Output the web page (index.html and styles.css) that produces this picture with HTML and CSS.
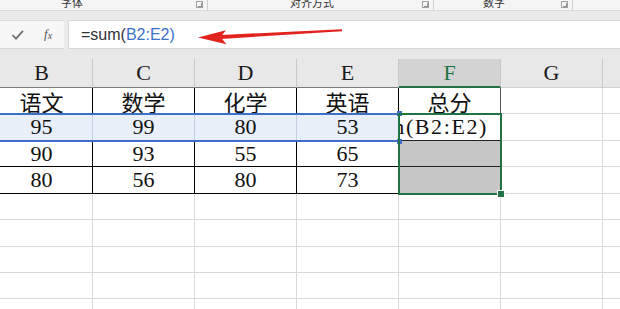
FILE: index.html
```html
<!DOCTYPE html>
<html lang="zh-CN">
<head>
<meta charset="utf-8">
<title>Excel sum</title>
<link rel="stylesheet" href="styles.css">
</head>
<body>
<div class="page">
  <div class="ribbon">
    <span class="rlabel l1">字体</span>
    <span class="launch i1"></span>
    <span class="rsep"></span>
    <span class="rlabel l2">对齐方式</span>
    <span class="launch i2"></span>
    <span class="rsep"></span>
    <span class="rlabel l3">数字</span>
    <span class="launch i3"></span>
    <span class="rsep"></span>
  </div>
  <div class="rline"></div>
  <div class="band"></div>
  <div class="fbar">
    <div class="fbar-left">
      <svg class="check" width="14" height="12" viewBox="0 0 14 12"><path d="M1.5 6.2 L5 9.6 L12 1.8" fill="none" stroke="#707070" stroke-width="1.8"/></svg>
      <span class="fx">f<span class="fxx">x</span></span>
    </div>
    <div class="fbar-input"><span class="fdark">=sum(</span><span class="fblue">B2:E2)</span></div>
  </div>
  <div class="band2"></div>
  <div class="sheet">
    <div class="c h">B</div>
    <div class="c h">C</div>
    <div class="c h">D</div>
    <div class="c h">E</div>
    <div class="c h hf">F</div>
    <div class="c h hg">G</div>
    <div class="c h hg"></div>

    <div class="c d">语文</div>
    <div class="c d">数学</div>
    <div class="c d">化学</div>
    <div class="c d">英语</div>
    <div class="c f1">总分</div>
    <div class="c"></div>
    <div class="c"></div>

    <div class="c d r2">95</div>
    <div class="c d r2">99</div>
    <div class="c d r2">80</div>
    <div class="c d r2">53</div>
    <div class="c f2"><span class="ftext">=sum(B2:E2)</span></div>
    <div class="c"></div>
    <div class="c"></div>

    <div class="c d">90</div>
    <div class="c d">93</div>
    <div class="c d">55</div>
    <div class="c d">65</div>
    <div class="c f3"></div>
    <div class="c"></div>
    <div class="c"></div>

    <div class="c d">80</div>
    <div class="c d">56</div>
    <div class="c d">80</div>
    <div class="c d">73</div>
    <div class="c f4"></div>
    <div class="c"></div>
    <div class="c"></div>

    <div class="c"></div><div class="c"></div><div class="c"></div><div class="c"></div><div class="c"></div><div class="c"></div><div class="c"></div>
    <div class="c"></div><div class="c"></div><div class="c"></div><div class="c"></div><div class="c"></div><div class="c"></div><div class="c"></div>
    <div class="c"></div><div class="c"></div><div class="c"></div><div class="c"></div><div class="c"></div><div class="c"></div><div class="c"></div>
    <div class="c"></div><div class="c"></div><div class="c"></div><div class="c"></div><div class="c"></div><div class="c"></div><div class="c"></div>
    <div class="c"></div><div class="c"></div><div class="c"></div><div class="c"></div><div class="c"></div><div class="c"></div><div class="c"></div>

    <div class="refsel"><span class="hdl ht"></span><span class="hdl hb"></span></div>
    <div class="cursel"><span class="fill"></span></div>
  </div>
  <svg class="arrow" width="620" height="60" viewBox="0 0 620 60">
    <polygon points="342,29.3 342,31.3 221,38.9 221,35" fill="#e3211d"/>
    <polygon points="198,37.6 226,30.2 220.5,37 226.5,44.2" fill="#e3211d"/>
  </svg>
</div>
</body>
</html>
```
FILE: styles.css
```css
html, body {
  margin: 0;
  padding: 0;
  background: #ffffff;
}
.page {
  position: relative;
  width: 620px;
  height: 309px;
  overflow: hidden;
  font-family: "Liberation Sans", "Noto Sans CJK SC", sans-serif;
}
.ribbon {
  height: 10px;
  background: #f5f5f5;
  display: flex;
  align-items: flex-start;
  overflow: hidden;
}
.rlabel {
  font-family: "Noto Sans CJK SC", sans-serif;
  font-size: 11px;
  line-height: 12px;
  color: #333;
  margin-top: -4px;
  white-space: nowrap;
}
.l1 { margin-left: 61px; }
.l2 { margin-left: 82px; }
.l3 { margin-left: 49px; }
.launch {
  width: 7px;
  height: 7px;
  border: 1px solid #a0a0a0;
  box-sizing: border-box;
  margin-top: 1px;
  position: relative;
}
.launch::after {
  content: "";
  position: absolute;
  left: 1px;
  top: 1px;
  width: 3px;
  height: 3px;
  border-right: 1px solid #909090;
  border-bottom: 1px solid #909090;
}
.i1 { margin-left: 113px; }
.i2 { margin-left: 88px; }
.i3 { margin-left: 56px; }
.rsep {
  width: 1px;
  height: 10px;
  background: #d0d0d0;
  margin-left: 4px;
}
.rline {
  height: 1px;
  background: #d8d8d8;
}
.band {
  height: 9px;
  background: #eaeaea;
}
.fbar {
  height: 29px;
  display: flex;
  background: #eaeaea;
}
.fbar-left {
  width: 64px;
  background: #f7f7f7;
  border-top: 1px solid #d8d8d8;
  border-bottom: 1px solid #d8d8d8;
  box-sizing: border-box;
  display: flex;
  align-items: center;
  padding-left: 11px;
  margin-right: 4px;
}
.check {
  display: block;
}
.fx {
  font-family: "Liberation Serif", serif;
  font-style: italic;
  font-size: 13px;
  color: #555;
  margin-left: 19px;
  margin-top: -2px;
}
.fxx {
  font-size: 10px;
  position: relative;
  top: 1px;
}
.fbar-input {
  flex: 1;
  background: #ffffff;
  border: 1px solid #d6d6d6;
  border-right: none;
  box-sizing: border-box;
  display: flex;
  align-items: center;
  padding-left: 12px;
  font-family: "Liberation Sans", "Noto Sans", sans-serif;
  font-size: 16px;
}
.fdark { color: #333333; }
.fblue { color: #3a72c8; }
.band2 {
  height: 10px;
  background: #e8e8e8;
}
.sheet {
  display: grid;
  grid-template-columns: repeat(7, 102px);
  grid-template-rows: 29px 26px 27px 26px 27px 26px 27px 26px 26px 26px;
  margin-left: -9px;
  position: relative;
}
.c {
  box-sizing: border-box;
  border-right: 1px solid #d8d8d8;
  border-bottom: 1px solid #d8d8d8;
  display: flex;
  align-items: center;
  justify-content: center;
  font-family: "Liberation Serif", "Noto Sans CJK SC", serif;
  font-size: 22px;
  color: #111;
  white-space: nowrap;
  overflow: hidden;
}
.h {
  background: #e8e8e8;
  border-right-color: #c8c8c8;
  border-bottom-color: #7a7a7a;
  color: #1a1a1a;
}
.hg {
  border-bottom-color: #d0d0d0;
}
.hf {
  background: #d3d3d3;
  color: #217346;
  border-bottom: 2px solid #217346;
}
.d {
  border-right-color: #000;
  border-bottom-color: #000;
}
.r2 {
  background: #e9eff9;
  border-right-color: #c4cee2;
}
.f1 {
  border-right-color: #555;
}
.f2 {
  justify-content: flex-end;
  padding-right: 12px;
  border-bottom-color: #222;
}
.ftext {
  letter-spacing: 1.6px;
}
.f3 {
  background: #c6c6c6;
  border-bottom-color: #222;
}
.f4 {
  background: #c6c6c6;
}
.refsel {
  position: absolute;
  grid-column: 1 / 5;
  grid-row: 3 / 4;
  top: -1px;
  bottom: -1px;
  left: 0;
  right: 0;
  border-top: 2px solid #3d6fc9;
  border-bottom: 2px solid #3d6fc9;
  z-index: 2;
  pointer-events: none;
}
.hdl {
  position: absolute;
  right: -3px;
  width: 5px;
  height: 5px;
  background: #3d6fc9;
}
.ht { top: -4px; }
.hb { bottom: -4px; }
.cursel {
  position: absolute;
  grid-column: 5 / 6;
  grid-row: 3 / 6;
  top: -1px;
  bottom: -1px;
  left: -1px;
  right: -1px;
  border: 2px solid #217346;
  z-index: 3;
  pointer-events: none;
}
.fill {
  position: absolute;
  right: -5px;
  bottom: -5px;
  width: 6px;
  height: 6px;
  background: #217346;
  border: 1px solid #ffffff;
}
.arrow {
  position: absolute;
  left: 0;
  top: 0;
}
```
